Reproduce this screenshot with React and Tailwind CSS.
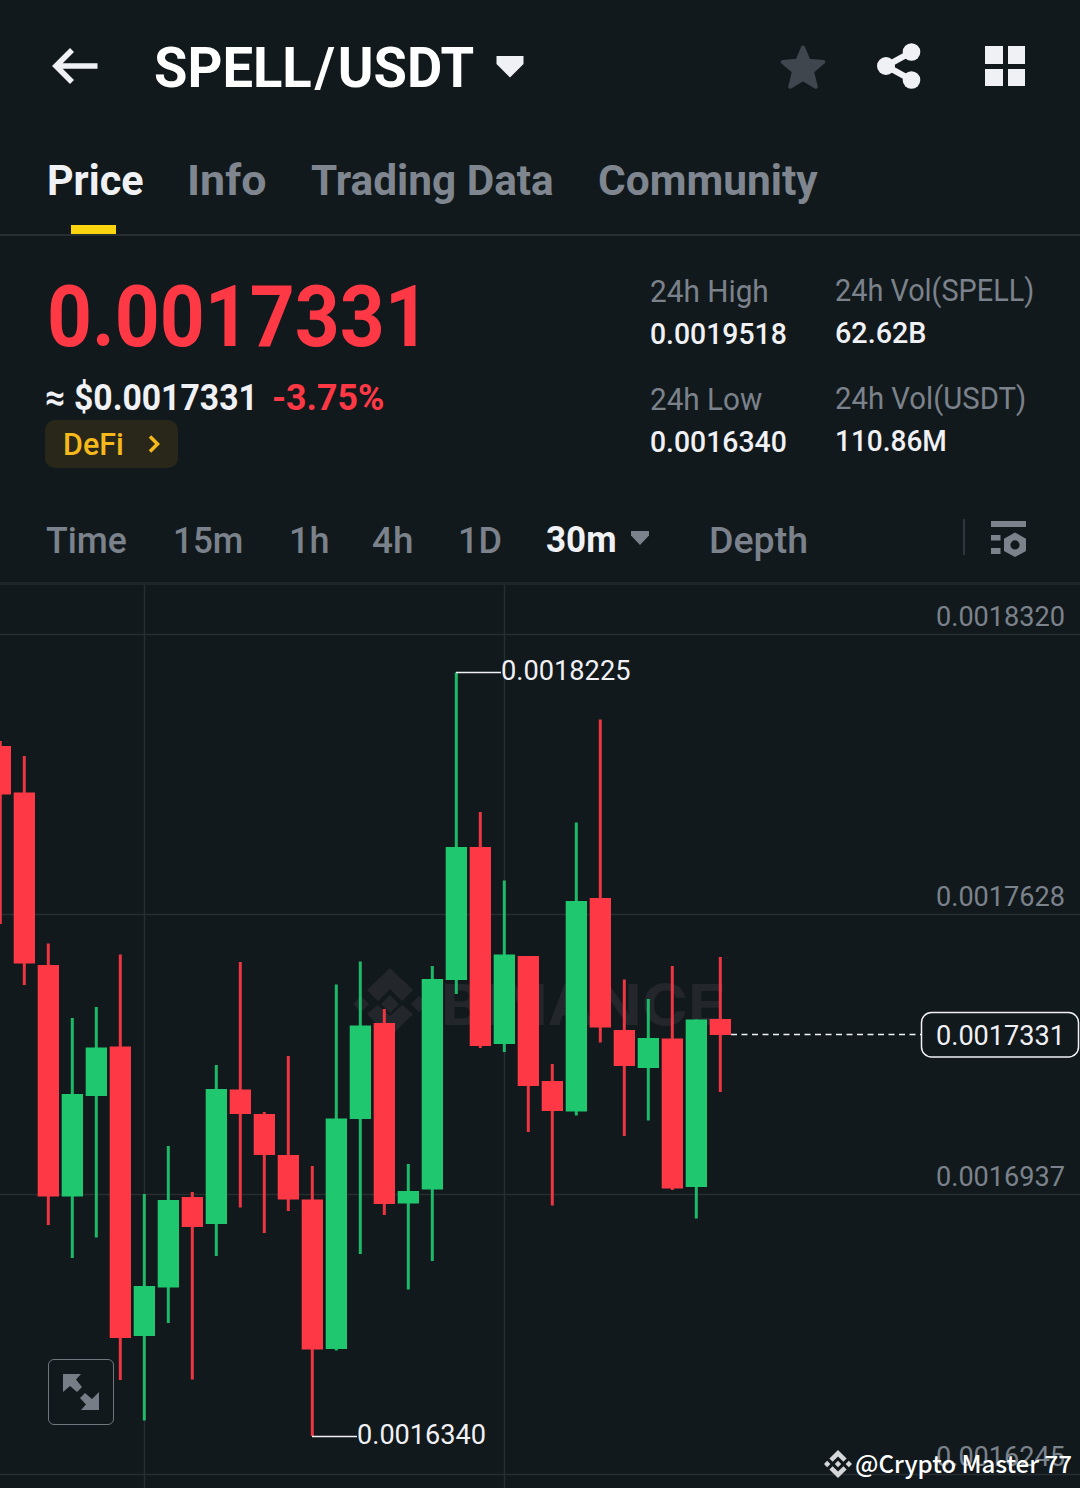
import React, { useLayoutEffect, useRef } from 'react';

const UP = '#1fc76f';
const DOWN = '#ff3846';

// [center x, high, low, body top, body bottom, color]
const candles = [
  [0, 741, 924, 746, 794.5, DOWN],
  [24, 756, 985, 792.5, 963.5, DOWN],
  [48, 943.5, 1225, 965, 1196.5, DOWN],
  [72, 1018, 1258, 1094, 1196.5, UP],
  [96, 1007, 1237.5, 1047.5, 1096, UP],
  [120, 954.5, 1380, 1046.5, 1338, DOWN],
  [144, 1194, 1420.5, 1286, 1336, UP],
  [168, 1146, 1323, 1200, 1287.5, UP],
  [192, 1192, 1379.5, 1197, 1227, DOWN],
  [216, 1065, 1256, 1089, 1224, UP],
  [240, 962, 1207.5, 1089.5, 1114, DOWN],
  [264, 1112, 1233, 1114, 1155, DOWN],
  [288, 1056, 1211, 1155, 1199.5, DOWN],
  [312, 1166, 1436, 1199.5, 1349.5, DOWN],
  [336, 984.5, 1350.5, 1118.5, 1349, UP],
  [360, 961.5, 1254, 1025.5, 1119, UP],
  [384, 1009, 1215, 1023, 1204, DOWN],
  [408, 1164, 1289.5, 1191, 1203.5, UP],
  [432, 966, 1261, 979, 1189.5, UP],
  [456, 672.5, 994, 847, 980, UP],
  [480, 812, 1048, 847, 1046, DOWN],
  [504, 880.5, 1052, 954.5, 1044, UP],
  [528, 956, 1132, 956, 1086, DOWN],
  [552, 1064, 1205.5, 1081, 1111, DOWN],
  [576, 822.5, 1115.5, 901, 1111.5, UP],
  [600, 719.5, 1042.5, 898, 1027.5, DOWN],
  [624, 979.5, 1136, 1030, 1066, DOWN],
  [648, 999, 1120.5, 1038, 1068, UP],
  [672, 966, 1190, 1038.5, 1188.5, DOWN],
  [696, 1019.5, 1218.5, 1019.5, 1187, UP],
  [720, 957, 1092, 1019, 1035, DOWN],
];

const axisLabels = [
  { y: 626, text: '0.0018320' },
  { y: 906, text: '0.0017628' },
  { y: 1186, text: '0.0016937' },
  { y: 1466, text: '0.0016245' },
];

// Squeezes or stretches one line of text to the width of its box
const FitText = ({ className, children }) => {
  const box = useRef(null);
  const inner = useRef(null);

  useLayoutEffect(() => {
    const ratio = box.current.offsetWidth / inner.current.offsetWidth;
    inner.current.style.transform = `scaleX(${ratio})`;
  }, [children]);

  return (
    <span ref={box} className={`block shrink-0 whitespace-nowrap ${className}`}>
      <span ref={inner} className="inline-block origin-left">{children}</span>
    </span>
  );
};

const BinanceMark = ({ className }) => (
  <svg viewBox="0 0 28 28" className={className} fill="currentColor">
    <path d="M14 0l8.6 8.6-3.2 3.2L14 6.4l-5.4 5.4-3.2-3.2z" />
    <path d="M14 28l8.6-8.6-3.2-3.2-5.4 5.4-5.4-5.4-3.2 3.2z" />
    <path d="M14 10.8l3.2 3.2-3.2 3.2-3.2-3.2zM3.2 10.8L6.4 14l-3.2 3.2L0 14zM24.8 10.8L28 14l-3.2 3.2-3.2-3.2z" />
  </svg>
);

const Header = () => (
  <header className="flex h-[133px] items-center pl-[52px] text-[#f0f1f5]">
    <svg className="mb-[2px]" width="46" height="36" viewBox="0 0 46 36" fill="none" stroke="currentColor" strokeWidth="5.6">
      <path d="M45.5 18H4M20 2L4 18l16 16" />
    </svg>
    <FitText className="ml-[56px] mt-[2px] w-[320px] text-[56px] font-bold text-white">
      SPELL<span className="mx-[3px]">/</span>USDT
    </FitText>
    <svg className="ml-[22px]" width="28" height="22" viewBox="0 0 28 22" fill="currentColor">
      <path d="M.5 0h27v8L14 21.500 .5 8z" />
    </svg>
    <svg className="ml-[256px] text-[#3f464e]" width="46" height="46" viewBox="0 0 46 46" fill="currentColor" stroke="currentColor" strokeWidth="4" strokeLinejoin="round">
      <path d="M23 3.500l5.600 13.300 14.600 1.200-11.200 9.500 3.800 15.200-12.800-7.700-12.800 7.700 3.800-15.200L2.800 18l14.600-1.200z" />
    </svg>
    <svg className="mb-[2px] ml-[51px]" width="44" height="46" viewBox="0 0 44 46" fill="currentColor">
      <path d="M34.500 9L9 23l25.500 14" fill="none" stroke="currentColor" strokeWidth="6" />
      <circle cx="9" cy="23" r="9" />
      <circle cx="34.500" cy="9" r="8.800" />
      <circle cx="34.500" cy="37" r="8.800" />
    </svg>
    <div className="mb-[1px] ml-[64px] grid grid-cols-2 gap-[5px]">
      <i className="h-[17.500px] w-[17.500px] bg-current" />
      <i className="h-[17.500px] w-[17.500px] bg-current" />
      <i className="h-[17.500px] w-[17.500px] bg-current" />
      <i className="h-[17.500px] w-[17.500px] bg-current" />
    </div>
  </header>
);

const Tabs = () => (
  <nav className="flex h-[103px] items-end border-b-2 border-[#272d31] pl-[46px] text-[43px] font-bold leading-[50px] text-[#7f868f]">
    <div className="flex w-[141px] flex-col">
      <FitText className="ml-[1px] w-[96px] text-[#f0f1f5]">Price</FitText>
      <div className="ml-[25px] mt-[20px] h-[9px] w-[45px] bg-[#fcd50f]" />
    </div>
    <FitText className="mb-[29px] mr-[45px] w-[79px]">Info</FitText>
    <FitText className="mb-[29px] mr-[44px] w-[243px]">Trading Data</FitText>
    <FitText className="mb-[29px] w-[220px]">Community</FitText>
  </nav>
);

const Stat = ({ label, value, labelWidth, valueWidth }) => (
  <div className="h-[108px]">
    <FitText className={`text-[31px] leading-[42px] text-[#7b828b] ${labelWidth}`}>{label}</FitText>
    <FitText className={`text-[30px] font-medium leading-[42px] text-[#f0f1f5] ${valueWidth}`}>{value}</FitText>
  </div>
);

const Summary = () => (
  <section className="flex h-[264px] items-start">
    <div className="w-[650px] pl-[45px] pt-[34px]">
      <FitText className="ml-[2px] w-[383px] text-[86px] font-bold leading-[94px] text-[#ff3846]">0.0017331</FitText>
      <div className="flex pt-[11px] text-[37px] font-bold leading-[45px]">
        <FitText className="w-[20px] text-[#f0f1f5]">≈</FitText>
        <FitText className="ml-[9px] w-[184px] text-[#f0f1f5]">$0.0017331</FitText>
        <FitText className="ml-[14px] w-[112px] text-[#ff3846]">-3.75%</FitText>
      </div>
      <div className="flex h-[48px] w-[133px] items-center rounded-[10px] bg-[#29271a] pl-[18px] text-[#f6b91c]">
        <FitText className="mt-[1px] w-[61px] text-[31px] font-medium leading-[48px]">DeFi</FitText>
        <svg className="ml-[24px]" width="12" height="18" viewBox="0 0 12 18" fill="none" stroke="currentColor" strokeWidth="3.500">
          <path d="M2 1.500L9.500 9 2 16.500" />
        </svg>
      </div>
    </div>
    <div className="w-[185px] pt-[35px]">
      <Stat label="24h High" value="0.0019518" labelWidth="w-[119px]" valueWidth="w-[137px]" />
      <Stat label="24h Low" value="0.0016340" labelWidth="w-[112px]" valueWidth="w-[137px]" />
    </div>
    <div className="pt-[34px]">
      <Stat label="24h Vol(SPELL)" value="62.62B" labelWidth="w-[199px]" valueWidth="w-[91px]" />
      <Stat label="24h Vol(USDT)" value="110.86M" labelWidth="w-[191px]" valueWidth="w-[112px]" />
    </div>
  </section>
);

const Intervals = () => (
  <div className="flex h-[85px] items-center border-b-[3px] border-[#1f2428] pl-[46px] text-[36px] font-medium leading-[42px] text-[#7b828b]">
    <FitText className="w-[81px]">Time</FitText>
    <FitText className="ml-[46px] w-[70px]">15m</FitText>
    <FitText className="ml-[46px] w-[40px]">1h</FitText>
    <FitText className="ml-[43px] w-[41px]">4h</FitText>
    <FitText className="ml-[45px] w-[44px]">1D</FitText>
    <FitText className="mb-[2px] ml-[44px] w-[71px] font-bold text-[#f0f1f5]">30m</FitText>
    <svg className="mb-[6px] ml-[14px]" width="18" height="14" viewBox="0 0 18 14" fill="currentColor">
      <path d="M0 0h18v4.500L9 14 0 4.500z" />
    </svg>
    <FitText className="ml-[60px] w-[99px]">Depth</FitText>
    <div className="mb-[8px] ml-[155px] h-[36px] w-[2px] bg-[#30363b]" />
    <svg className="mb-[4px] ml-[26px]" width="36" height="36" viewBox="0 0 36 36" fill="currentColor">
      <path d="M0 0h35v6H0zM0 14h9.500v5.500H0zM0 27h9.500v6H0z" />
      <path fillRule="evenodd" d="M24 11.500l11 6.200v12.300l-11 6-11-6V17.700zM24 19.300a4.600 4.600 0 1 0 0 9.200 4.600 4.600 0 0 0 0-9.200z" />
    </svg>
  </div>
);

const Chart = () => (
  <section className="relative h-[903px] overflow-hidden">
    <svg className="block" width="1080" height="903" viewBox="0 585 1080 903" fontFamily="Roboto, sans-serif" fontSize="28">
      <g stroke="#272d31" strokeWidth="1.500">
        {[634.5, 914.5, 1194.5, 1474.5].map((y) => (
          <line key={y} x1="0" x2="1080" y1={y} y2={y} />
        ))}
        <line x1="144.500" x2="144.500" y1="585" y2="1488" />
        <line x1="504.500" x2="504.500" y1="585" y2="1488" />
      </g>

      {/* Watermark */}
      <g fill="#23262a">
        <path d="M390 968l23 22-11 11-12-12-12 12-11-11z" />
        <path d="M390 1037l23-23-11-9-12 11-12-11-11 9z" />
        <path d="M390 995l9 9-9 9-9-9zM361 996l8 8-8 8-8-8zM419 996l8 8-8 8-8-8z" />
        <text x="441" y="1024.500" fontFamily="Inter, sans-serif" fontSize="56" fontWeight="700" textLength="285" lengthAdjust="spacingAndGlyphs">BINANCE</text>
      </g>

      {candles.map(([x, high, low, top, bottom, color]) => (
        <g key={x} fill={color}>
          <rect x={x - 1.2} y={high} width="3" height={low - high} fillOpacity="0.92" />
          <rect x={x - 10.3} y={top} width="21.300" height={bottom - top} />
        </g>
      ))}

      <g fill="#7b828b">
        {axisLabels.map(({ y, text }) => (
          <text key={y} x="936" y={y} textLength="129" lengthAdjust="spacingAndGlyphs">{text}</text>
        ))}
      </g>

      {/* High and low callouts */}
      <g stroke="#f0f1f5" strokeWidth="1.500">
        <line x1="456" x2="501" y1="672.500" y2="672.500" />
        <line x1="312" x2="357" y1="1436.500" y2="1436.500" />
      </g>
      <g fill="#f0f1f5">
        <text x="501" y="680" textLength="129.500" lengthAdjust="spacingAndGlyphs">0.0018225</text>
        <text x="357" y="1444" textLength="129" lengthAdjust="spacingAndGlyphs">0.0016340</text>
      </g>

      {/* Last price */}
      <line x1="731" x2="921" y1="1034.500" y2="1034.500" stroke="#f0f1f5" strokeWidth="1.500" strokeDasharray="6 4.500" />
      <rect x="921.500" y="1012.500" width="157" height="44.500" rx="10" fill="#12191c" stroke="#f0f1f5" strokeWidth="1.500" />
      <text x="936" y="1045" fill="#f0f1f5" textLength="129" lengthAdjust="spacingAndGlyphs">0.0017331</text>
    </svg>

    <button className="absolute left-[48px] top-[774px] flex h-[66px] w-[66px] items-center justify-center rounded-[6px] border-[1.5px] border-[#6f767f] text-[#767d87]" aria-label="Expand chart">
      <svg width="38" height="38" viewBox="0 0 38 38" fill="currentColor">
        <path d="M1 1h18l-5 5.500 6 7.500-5 5-7-6-7 6z" />
        <path d="M37 37H19l5-5.500-6-6.500 5-5 7 6 7-7z" />
      </svg>
    </button>

    <div className="absolute left-[824px] top-[861px] flex items-center">
      <BinanceMark className="mt-[2px] h-[28px] w-[28px] text-[#d5d6d8]" />
      <FitText className="ml-[3px] w-[217px] font-['Noto_Sans_CJK_SC',sans-serif] text-[24px] font-medium leading-[34px] text-white">@Crypto Master 77</FitText>
    </div>
  </section>
);

const App = () => (
  <main className="h-[1488px] w-[1080px] overflow-hidden bg-[#12191c] font-[Roboto,sans-serif]">
    <Header />
    <Tabs />
    <Summary />
    <Intervals />
    <Chart />
  </main>
);

export default App;
